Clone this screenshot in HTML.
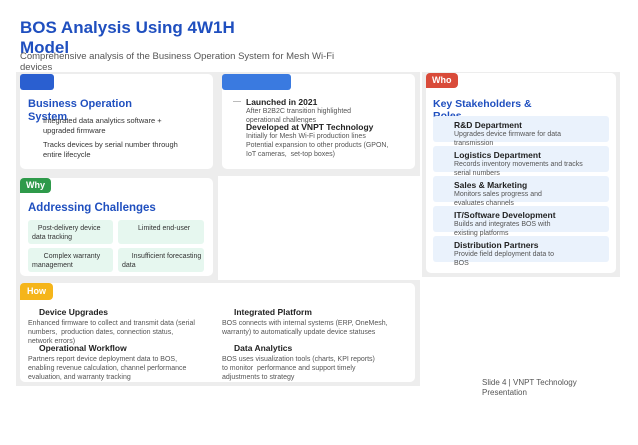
<!DOCTYPE html><html><head><meta charset="utf-8"><style>
body{margin:0;width:638px;height:445px;background:#fff;font-family:"Liberation Sans","DejaVu Sans",sans-serif;position:relative;overflow:hidden}
.a{position:absolute}
.g{position:absolute;background:#ededed}
.c{position:absolute;background:#fff;border-radius:5px}
.tag{position:absolute;color:#fff;font-weight:bold;font-size:9px;padding:2px 6px;border-radius:4px 4px 4px 0;line-height:11px}
.h{color:#1f4fbf;font-weight:bold}
.t{font-size:7px;color:#555;line-height:9px}
.b{font-size:8.5px;font-weight:bold;color:#222}
.box{position:absolute;background:#eaf2fc;border-radius:3px}
.gb{position:absolute;background:#e6f7ef;border-radius:3px;font-size:7px;color:#333;line-height:9px}
</style></head><body>
<div class="a h" style="left:20px;top:18px;font-size:17px;line-height:20px;width:240px">BOS Analysis Using 4W1H Model</div>
<div class="a" style="left:20px;top:51px;font-size:9.5px;color:#555;line-height:11px;width:330px">Comprehensive analysis of the Business Operation System for Mesh Wi-Fi devices</div>

<div class="g" style="left:16px;top:72px;width:202px;height:104px"></div>
<div class="c" style="left:20px;top:74px;width:193px;height:95px"></div>
<div class="a" style="left:20px;top:74px;width:34px;height:16px;background:#2a5fd0;border-radius:3px"></div>
<div class="a h" style="left:28px;top:98px;font-size:11px;line-height:13px;width:110px">Business Operation System</div>
<div class="a" style="left:43px;top:116px;font-size:7.5px;color:#333;line-height:10px;width:140px">Integrated data analytics software + upgraded firmware</div>
<div class="a" style="left:43px;top:140px;font-size:7.5px;color:#333;line-height:10px;width:140px">Tracks devices by serial number through entire lifecycle</div>

<div class="g" style="left:218px;top:72px;width:202px;height:104px"></div>
<div class="c" style="left:222px;top:74px;width:193px;height:95px"></div>
<div class="a" style="left:222px;top:74px;width:69px;height:16px;background:#3a7ae0;border-radius:3px"></div>
<div class="a" style="left:233px;top:101px;width:8px;height:1px;background:#bbb"></div>
<div class="a b" style="left:246px;top:97px">Launched in 2021</div>
<div class="a t" style="left:246px;top:107px;width:140px">After B2B2C transition highlighted operational challenges</div>
<div class="a b" style="left:246px;top:122px">Developed at VNPT Technology</div>
<div class="a t" style="left:246px;top:132px;width:150px">Initially for Mesh Wi-Fi production lines<br>Potential expansion to other products (GPON, IoT cameras, &nbsp;set-top boxes)</div>

<div class="g" style="left:422px;top:72px;width:198px;height:205px"></div>
<div class="c" style="left:426px;top:73px;width:190px;height:200px"></div>
<div class="tag" style="left:426px;top:73px;background:#d94b3a">Who</div>
<div class="a h" style="left:433px;top:98px;font-size:10.5px;line-height:12px;width:110px">Key Stakeholders &amp; Roles</div>
<div class="box" style="left:433px;top:116px;width:176px;height:26px"></div>
<div class="box" style="left:433px;top:146px;width:176px;height:26px"></div>
<div class="box" style="left:433px;top:176px;width:176px;height:26px"></div>
<div class="box" style="left:433px;top:206px;width:176px;height:26px"></div>
<div class="box" style="left:433px;top:236px;width:176px;height:26px"></div>
<div class="a b" style="left:454px;top:120px">R&amp;D Department</div><div class="a t" style="left:454px;top:130px;width:110px">Upgrades device firmware for data transmission</div>
<div class="a b" style="left:454px;top:150px">Logistics Department</div><div class="a t" style="left:454px;top:160px;width:140px">Records inventory movements and tracks serial numbers</div>
<div class="a b" style="left:454px;top:180px">Sales &amp; Marketing</div><div class="a t" style="left:454px;top:190px;width:110px">Monitors sales progress and evaluates channels</div>
<div class="a b" style="left:454px;top:210px">IT/Software Development</div><div class="a t" style="left:454px;top:220px;width:120px">Builds and integrates BOS with existing platforms</div>
<div class="a b" style="left:454px;top:240px">Distribution Partners</div><div class="a t" style="left:454px;top:250px;width:100px">Provide field deployment data to BOS</div>

<div class="g" style="left:16px;top:176px;width:202px;height:104px"></div>
<div class="c" style="left:20px;top:178px;width:193px;height:98px"></div>
<div class="tag" style="left:20px;top:178px;background:#2e9a4a">Why</div>
<div class="a h" style="left:28px;top:202px;font-size:11.5px">Addressing Challenges</div>
<div class="gb" style="left:28px;top:220px;width:85px;height:24px;padding:4px 0 0 4px;box-sizing:border-box">&nbsp;&nbsp;&nbsp;Post-delivery device data tracking</div>
<div class="gb" style="left:118px;top:220px;width:86px;height:24px;padding:4px 0 0 20px;box-sizing:border-box">Limited end-user</div>
<div class="gb" style="left:28px;top:248px;width:85px;height:24px;padding:4px 0 0 4px;box-sizing:border-box">&nbsp;&nbsp;&nbsp;&nbsp;&nbsp;&nbsp;Complex warranty management</div>
<div class="gb" style="left:118px;top:248px;width:86px;height:24px;padding:4px 0 0 4px;box-sizing:border-box">&nbsp;&nbsp;&nbsp;&nbsp;&nbsp;Insufficient forecasting data</div>

<div class="g" style="left:16px;top:280px;width:404px;height:106px"></div>
<div class="c" style="left:20px;top:283px;width:395px;height:99px"></div>
<div class="tag" style="left:20px;top:283px;background:#f5b51a;padding:3px 7px">How</div>
<div class="a b" style="left:39px;top:307px">Device Upgrades</div>
<div class="a t" style="left:28px;top:319px;width:170px">Enhanced firmware to collect and transmit data (serial numbers, &nbsp;production dates, connection status, network errors)</div>
<div class="a b" style="left:39px;top:343px">Operational Workflow</div>
<div class="a t" style="left:28px;top:355px;width:170px">Partners report device deployment data to BOS, enabling revenue calculation, channel performance evaluation, and warranty tracking</div>
<div class="a b" style="left:234px;top:307px">Integrated Platform</div>
<div class="a t" style="left:222px;top:319px;width:170px">BOS connects with internal systems (ERP, OneMesh, warranty) to automatically update device statuses</div>
<div class="a b" style="left:234px;top:343px">Data Analytics</div>
<div class="a t" style="left:222px;top:355px;width:160px">BOS uses visualization tools (charts, KPI reports) to monitor &nbsp;performance and support timely adjustments to strategy</div>

<div class="a" style="left:482px;top:378px;font-size:8px;color:#555;line-height:10px;width:120px">Slide 4 | VNPT Technology Presentation</div>
</body></html>
